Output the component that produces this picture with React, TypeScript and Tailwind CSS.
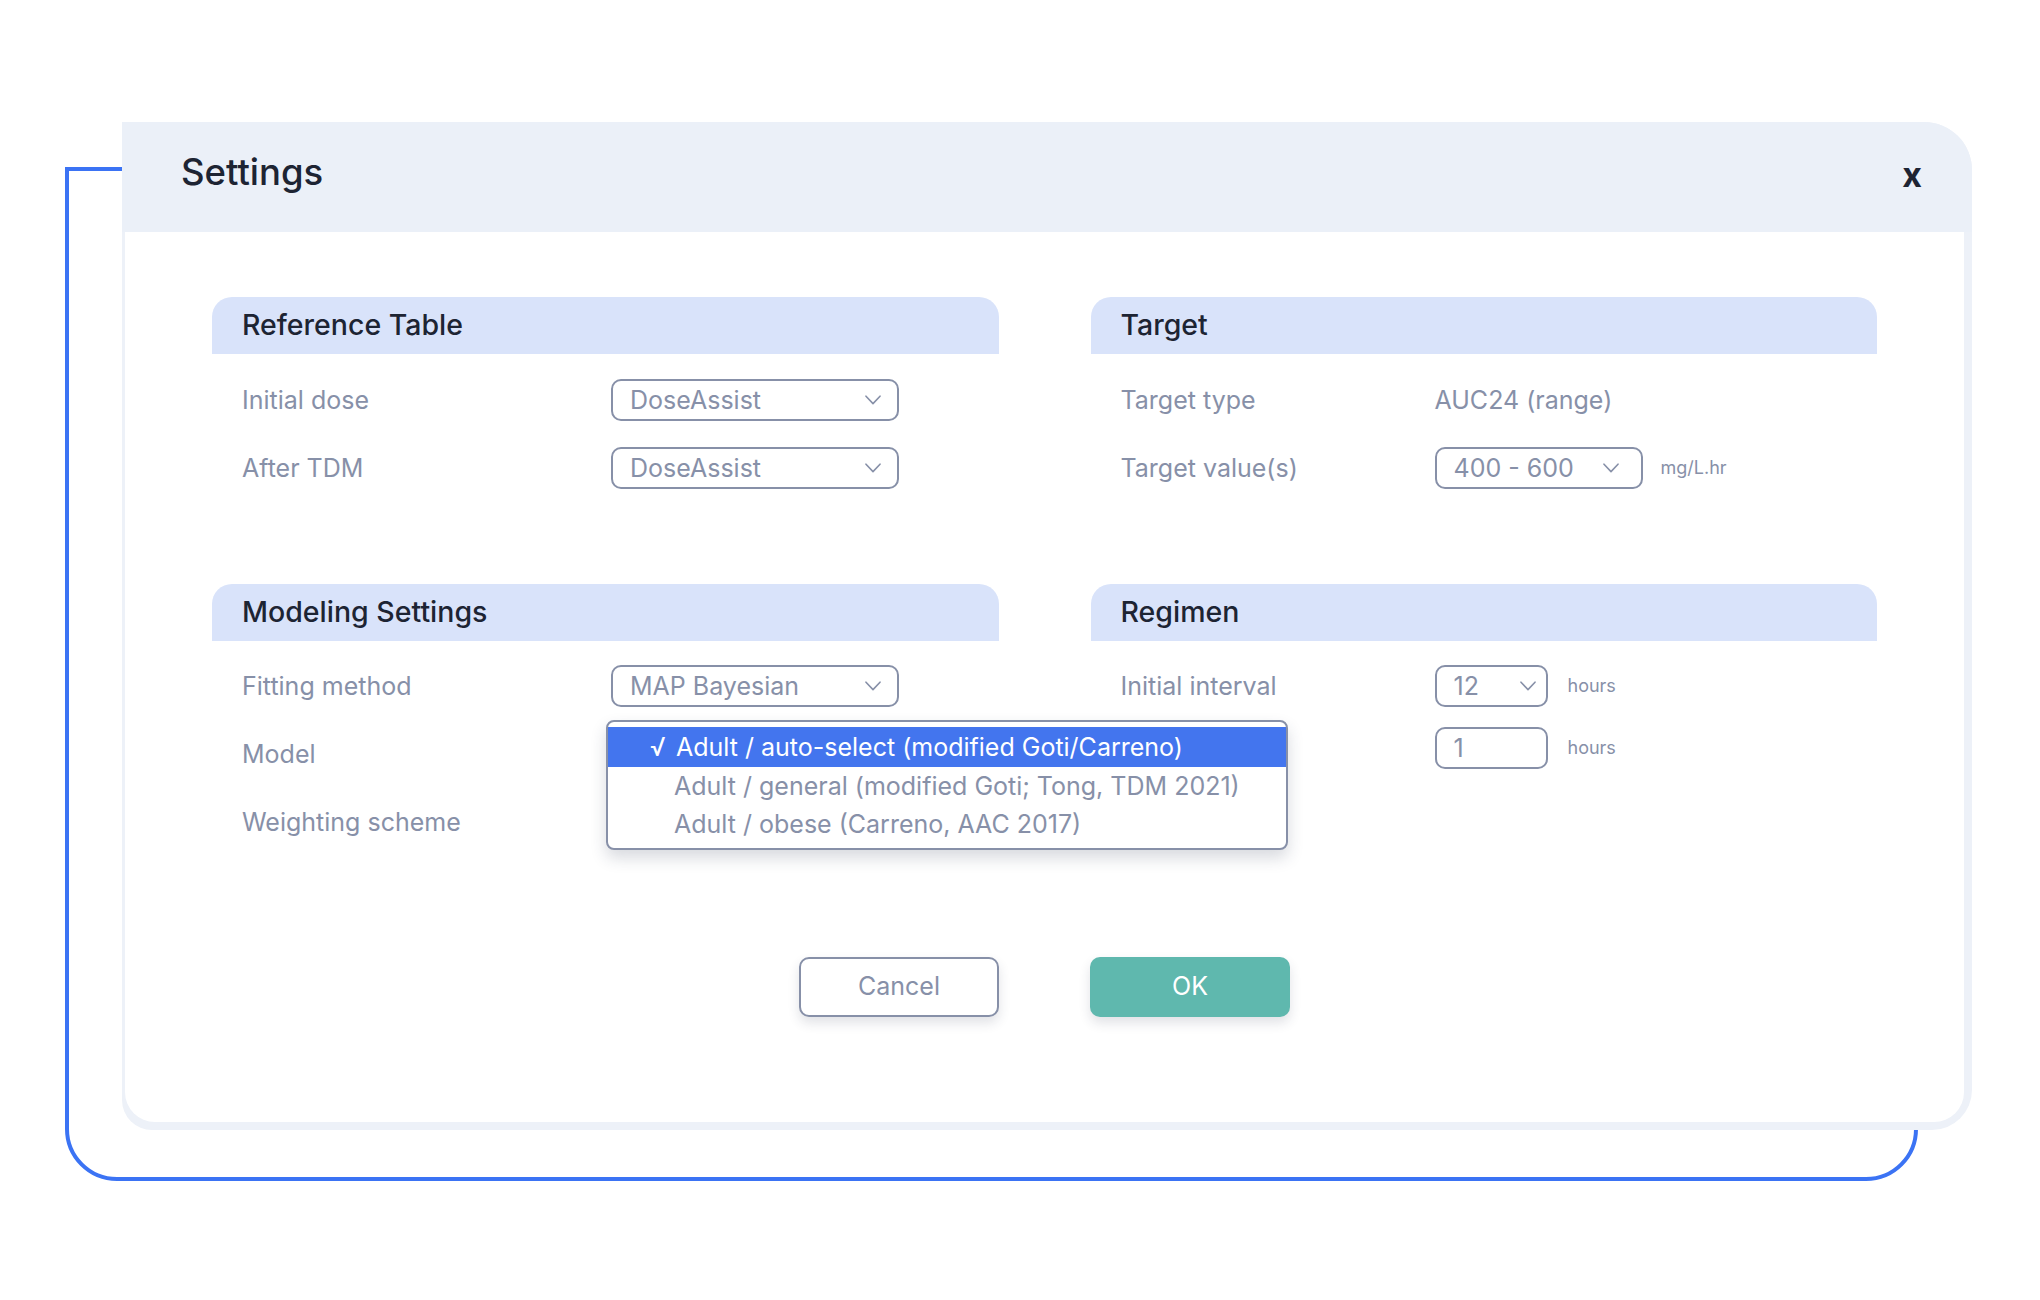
import React from 'react';

const GRAY = 'text-[#8790a8]';

const Chevron: React.FC = () => (
  <svg width="16" height="10" viewBox="0 0 16 10" fill="none" className="shrink-0">
    <path d="M1 1.2L8 8.6L15 1.2" stroke="#8790a8" strokeWidth="1.6" strokeLinecap="round" strokeLinejoin="round" />
  </svg>
);

interface SelectProps {
  value?: string;
  width: string;
  pr?: string;
  arrow?: boolean;
}

const SelectBox: React.FC<SelectProps> = ({ value = '', width, pr = 'pr-[16px]', arrow = true }) => (
  <div
    className={`${width} ${pr} h-[42px] shrink-0 border-2 border-[#8790a8] rounded-[10px] pl-[17px] flex items-center justify-between text-[25px] leading-none ${GRAY}`}
  >
    <span>{value}</span>
    {arrow && <Chevron />}
  </div>
);

const SectionHeader: React.FC<{ title: string }> = ({ title }) => (
  <div className="h-[57px] bg-[#d9e3fa] rounded-t-[20px] px-[30px] flex items-center">
    <span className="text-[28.5px] font-medium text-[#1d2433] leading-none">{title}</span>
  </div>
);

const Row: React.FC<{ label?: string; labelWidth: string; children?: React.ReactNode }> = ({ label = '', labelWidth, children }) => (
  <div className="h-[42px] flex items-center px-[30px]">
    <span className={`${labelWidth} shrink-0 text-[25px] leading-none ${GRAY}`}>{label}</span>
    {children}
  </div>
);

const Unit: React.FC<{ text: string; ml: string }> = ({ text, ml }) => (
  <span className={`${ml} text-[18px] leading-none ${GRAY}`}>{text}</span>
);

// open list of the Model select, lying over the rows below it
const ModelDropdown: React.FC = () => (
  <div className="absolute left-[-5px] top-[-13px] w-[682px] z-10 bg-white border-2 border-[#8790a8] rounded-[8px] pt-[5px] pb-[6px] shadow-[0_8px_16px_rgba(40,50,80,0.18)] text-[25px] leading-none">
    <div className="h-[40px] bg-[#4375ee] text-white flex items-center pl-[42px]">
      <span className="w-[26px]">√</span>
      <span>Adult / auto-select (modified Goti/Carreno)</span>
    </div>
    <div className={`h-[39px] flex items-center pl-[66px] ${GRAY}`}>Adult / general (modified Goti; Tong, TDM 2021)</div>
    <div className={`h-[36px] flex items-center pl-[66px] ${GRAY}`}>Adult / obese (Carreno, AAC 2017)</div>
  </div>
);

export default function App() {
  return (
    <div className="relative w-[2040px] h-[1300px] bg-white overflow-hidden font-['Inter','Liberation_Sans',sans-serif]">
      {/* blue frame behind the dialog */}
      <div className="absolute left-[65px] top-[167px] w-[1853px] h-[1014px] border-4 border-[#3b73f4] rounded-b-[52px]" />

      <div className="relative pt-[122px] pl-[122px]">
        <div className="w-[1850px] h-[1008px] bg-[#edf1f8] rounded-tr-[48px] rounded-br-[40px] rounded-bl-[30px] flex flex-col">
          {/* header */}
          <div className="h-[110px] shrink-0 bg-[#ebf0f8] rounded-tr-[48px] flex items-center justify-between pl-[59px] pr-[50px]">
            <h1 className="text-[36.5px] font-medium text-[#1d2433] leading-none pb-[9px]">Settings</h1>
            <span className="text-[34px] font-bold text-[#1d2433] leading-none pb-[5px]">x</span>
          </div>

          {/* body */}
          <div className="flex-1 pl-[3px] pr-[8px] pb-[8px] flex">
            <div className="flex-1 bg-white rounded-b-[30px] px-[87px] pt-[65px]">
              <div className="grid grid-cols-2 gap-x-[92px]">
                {/* Reference Table */}
                <div>
                  <SectionHeader title="Reference Table" />
                  <div className="pt-[25px] flex flex-col gap-[26px]">
                    <Row label="Initial dose" labelWidth="w-[369px]">
                      <SelectBox value="DoseAssist" width="w-[288px]" />
                    </Row>
                    <Row label="After TDM" labelWidth="w-[369px]">
                      <SelectBox value="DoseAssist" width="w-[288px]" />
                    </Row>
                  </div>
                </div>

                {/* Target */}
                <div>
                  <SectionHeader title="Target" />
                  <div className="pt-[25px] flex flex-col gap-[26px]">
                    <Row label="Target type" labelWidth="w-[314px]">
                      <span className={`text-[25px] leading-none ${GRAY}`}>AUC24 (range)</span>
                    </Row>
                    <Row label="Target value(s)" labelWidth="w-[314px]">
                      <SelectBox value="400 - 600" width="w-[208px]" pr="pr-[22px]" />
                      <Unit text="mg/L.hr" ml="ml-[18px]" />
                    </Row>
                  </div>
                </div>

                {/* Modeling Settings */}
                <div className="mt-[95px]">
                  <SectionHeader title="Modeling Settings" />
                  <div className="pt-[24px] flex flex-col gap-[26px]">
                    <Row label="Fitting method" labelWidth="w-[369px]">
                      <SelectBox value="MAP Bayesian" width="w-[288px]" />
                    </Row>
                    <Row label="Model" labelWidth="w-[369px]">
                      <div className="relative">
                        <SelectBox width="w-[288px]" />
                        <ModelDropdown />
                      </div>
                    </Row>
                    <Row label="Weighting scheme" labelWidth="w-[369px]">
                      <SelectBox width="w-[288px]" />
                    </Row>
                  </div>
                </div>

                {/* Regimen */}
                <div className="mt-[95px]">
                  <SectionHeader title="Regimen" />
                  <div className="pt-[24px] flex flex-col gap-[20px]">
                    <Row label="Initial interval" labelWidth="w-[314px]">
                      <SelectBox value="12" width="w-[113px]" pr="pr-[10px]" />
                      <Unit text="hours" ml="ml-[20px]" />
                    </Row>
                    <Row labelWidth="w-[314px]">
                      <SelectBox value="1" width="w-[113px]" arrow={false} />
                      <Unit text="hours" ml="ml-[20px]" />
                    </Row>
                  </div>
                </div>
              </div>

              {/* actions */}
              <div className="mt-[114px] flex justify-center gap-[91px]">
                <button className="w-[200px] h-[60px] bg-white border-2 border-[#8790a8] rounded-[10px] text-[25px] text-[#8790a8] shadow-[0_6px_12px_rgba(40,50,80,0.14)]">
                  Cancel
                </button>
                <button className="w-[200px] h-[60px] bg-[#5fb8ae] rounded-[10px] text-[25px] text-white shadow-[0_6px_12px_rgba(40,50,80,0.14)]">
                  OK
                </button>
              </div>
            </div>
          </div>
        </div>
      </div>
    </div>
  );
}
